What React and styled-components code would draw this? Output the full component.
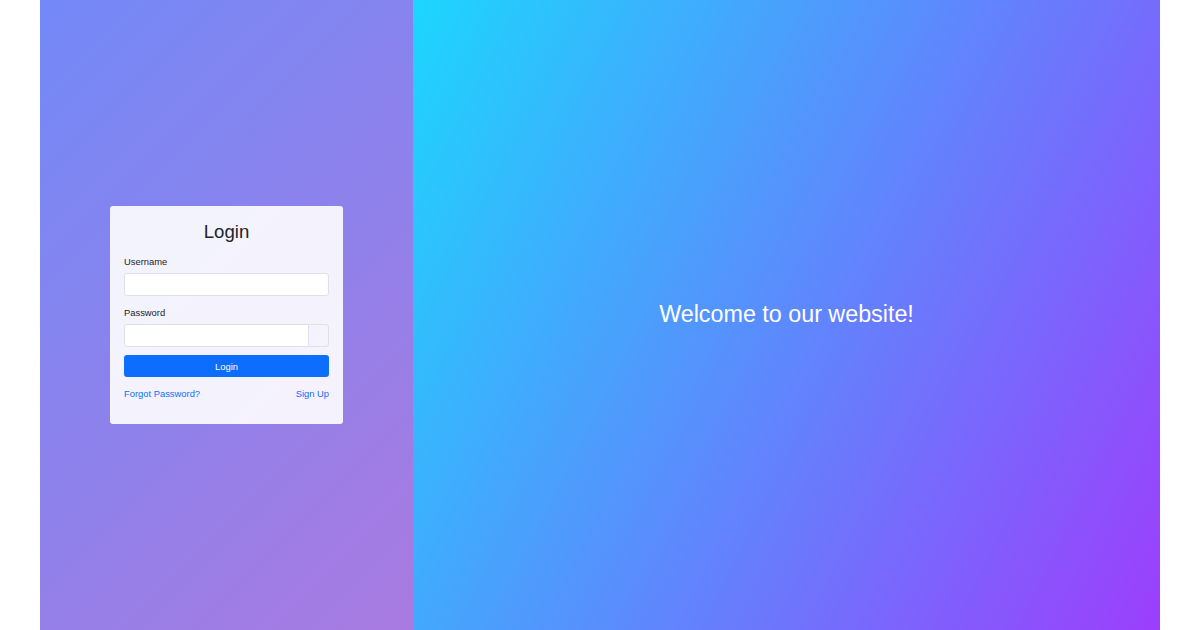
import React from "react";
import styled, { createGlobalStyle } from "styled-components";

const GlobalStyle = createGlobalStyle`
  html, body {
    margin: 0;
    padding: 0;
    background: #fff;
    font-family: "Liberation Sans", Arial, sans-serif;
  }
  * {
    box-sizing: border-box;
  }
`;

const Page = styled.div`
  width: 1120px;
  height: 630px;
  margin: 0 auto;
  display: flex;
`;

const LoginSide = styled.div`
  flex: 0 0 373px;
  display: flex;
  align-items: center;
  justify-content: center;
  background: linear-gradient(135deg, #7289f7 0%, #a97ae0 100%);
`;

const WelcomeSide = styled.div`
  flex: 1;
  display: flex;
  align-items: center;
  justify-content: center;
  background: linear-gradient(117deg, #1cd6fd 0%, #9c3efc 100%);
`;

const Welcome = styled.h1`
  margin: 0;
  color: #fff;
  font-weight: 400;
  font-size: 23.3px;
  line-height: 1.2;
`;

const Card = styled.form`
  width: 233px;
  padding: 14px 14px 23px;
  background: rgba(255, 255, 255, 0.9);
  border-radius: 3px;
  color: #212529;
`;

const Title = styled.h2`
  margin: 0 0 12px;
  text-align: center;
  font-size: 18.6px;
  font-weight: 400;
  line-height: 23px;
`;

const Field = styled.div`
  margin-bottom: ${(p) => p.mb || 10}px;
`;

const Label = styled.label`
  display: block;
  font-size: 9.4px;
  line-height: 14px;
  margin-bottom: 4px;
`;

const InputGroup = styled.div`
  display: flex;
`;

const Input = styled.input`
  display: block;
  width: 100%;
  height: 23px;
  padding: 0 7px;
  font-size: 9.4px;
  font-family: inherit;
  background: #fff;
  border: 1px solid #dee2e6;
  border-radius: ${(p) => (p.$grouped ? "3px 0 0 3px" : "3px")};
  outline: none;
`;

const EyeButton = styled.button`
  flex: 0 0 20px;
  height: 23px;
  padding: 0;
  background: transparent;
  border: 1px solid #dee2e6;
  border-left: none;
  border-radius: 0 3px 3px 0;
`;

const SubmitButton = styled.button`
  display: block;
  width: 100%;
  height: 22px;
  margin-bottom: 10px;
  padding: 0;
  background: #0d6efd;
  color: #fff;
  border: none;
  border-radius: 3px;
  font-family: inherit;
  font-size: 9.4px;
`;

const Links = styled.div`
  display: flex;
  justify-content: space-between;
  font-size: 9.4px;
  line-height: 13px;
  margin-bottom: 1px;
`;

const Link = styled.a`
  color: #0d6efd;
  text-decoration: none;
`;

export default function App() {
  return (
    <>
      <GlobalStyle />
      <Page>
        <LoginSide>
          <Card onSubmit={(e) => e.preventDefault()}>
            <Title>Login</Title>
            <Field>
              <Label>Username</Label>
              <Input type="text" />
            </Field>
            <Field mb={8}>
              <Label>Password</Label>
              <InputGroup>
                <Input type="password" $grouped />
                <EyeButton type="button" />
              </InputGroup>
            </Field>
            <SubmitButton type="submit">Login</SubmitButton>
            <Links>
              <Link href="#">Forgot Password?</Link>
              <Link href="#">Sign Up</Link>
            </Links>
          </Card>
        </LoginSide>
        <WelcomeSide>
          <Welcome>Welcome to our website!</Welcome>
        </WelcomeSide>
      </Page>
    </>
  );
}
